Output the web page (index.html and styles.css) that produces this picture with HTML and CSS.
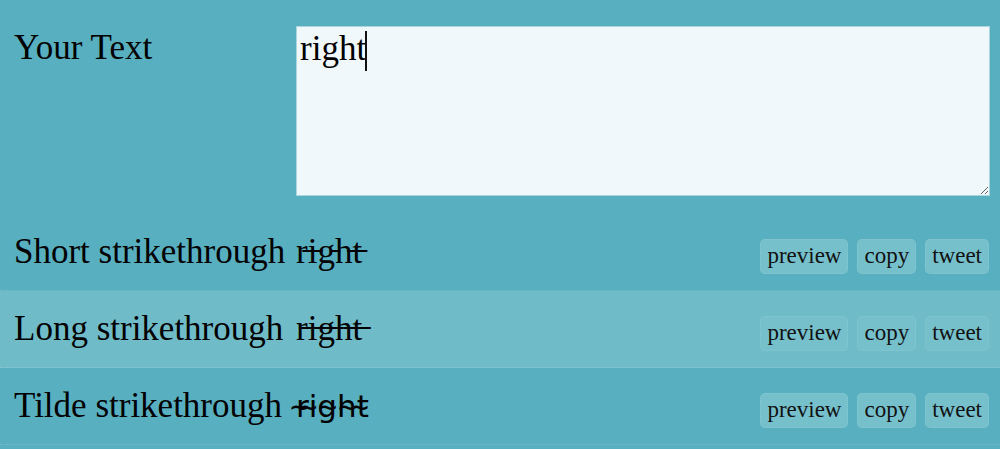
FILE: index.html
```html
<!DOCTYPE html>
<html lang="en">
<head>
<meta charset="utf-8">
<title>Strikethrough Text</title>
<link rel="stylesheet" href="styles.css">
</head>
<body>
<div class="input-row">
  <label class="label label-top" for="src">Your Text</label>
  <div class="field">
    <textarea id="src" class="source">right</textarea>
    <span class="caret"></span>
  </div>
</div>
<div class="row">
  <div class="label">Short strikethrough</div>
  <div class="output">r̵i̵g̵h̵t̵</div>
  <div class="actions">
    <button class="btn">preview</button>
    <button class="btn">copy</button>
    <button class="btn">tweet</button>
  </div>
</div>
<div class="row row-alt">
  <div class="label">Long strikethrough</div>
  <div class="output">r̶i̶g̶h̶t̶</div>
  <div class="actions">
    <button class="btn">preview</button>
    <button class="btn">copy</button>
    <button class="btn">tweet</button>
  </div>
</div>
<div class="row">
  <div class="label">Tilde strikethrough</div>
  <div class="output output-tilde">r̴i̴g̴h̴t̴</div>
  <div class="actions">
    <button class="btn">preview</button>
    <button class="btn">copy</button>
    <button class="btn">tweet</button>
  </div>
</div>
</body>
</html>
```
FILE: styles.css
```css
html, body {
  margin: 0;
  padding: 0;
}
body {
  background: #57afbf;
  font-family: "Liberation Serif", "Times New Roman", serif;
  color: #000;
  font-size: 35px;
  line-height: 40px;
  overflow: hidden;
}
.input-row {
  display: flex;
  align-items: flex-start;
  padding: 26px 10px 18px 14px;
}
.label {
  width: 282px;
  flex: none;
}
.label-top {
  margin-top: 2px;
}
.field {
  flex: 1;
  position: relative;
  display: flex;
}
.source {
  flex: 1;
  height: 170px;
  box-sizing: border-box;
  margin: 0;
  padding: 2px 3px;
  border: 1px solid #a9d6df;
  background: #f0f8fb;
  font-family: "Liberation Serif", "Times New Roman", serif;
  font-size: 35px;
  line-height: 40px;
  color: #000;
  outline: none;
  resize: vertical;
}
.caret {
  position: absolute;
  left: 69px;
  top: 5px;
  width: 2px;
  height: 40px;
  background: #111;
}
.row {
  display: flex;
  align-items: baseline;
  height: 77px;
  box-sizing: border-box;
  padding: 18px 11px 0 14px;
  border-bottom: 1px dotted rgba(255, 255, 255, 0.18);
}
.row-alt {
  background: #6fbcc8;
}
.output {
  flex: 1;
  white-space: nowrap;
}
.output-tilde {
  font-family: "DejaVu Sans", sans-serif;
  font-size: 31px;
}
.actions {
  display: flex;
  align-items: baseline;
  gap: 9px;
}
.btn {
  font-family: "Liberation Serif", "Times New Roman", serif;
  font-size: 23px;
  line-height: 26px;
  color: #111;
  background: #76c0cc;
  border: 1px dotted rgba(255, 255, 255, 0.12);
  border-radius: 5px;
  padding: 3px 6px 4px;
  margin: 0;
}
```
